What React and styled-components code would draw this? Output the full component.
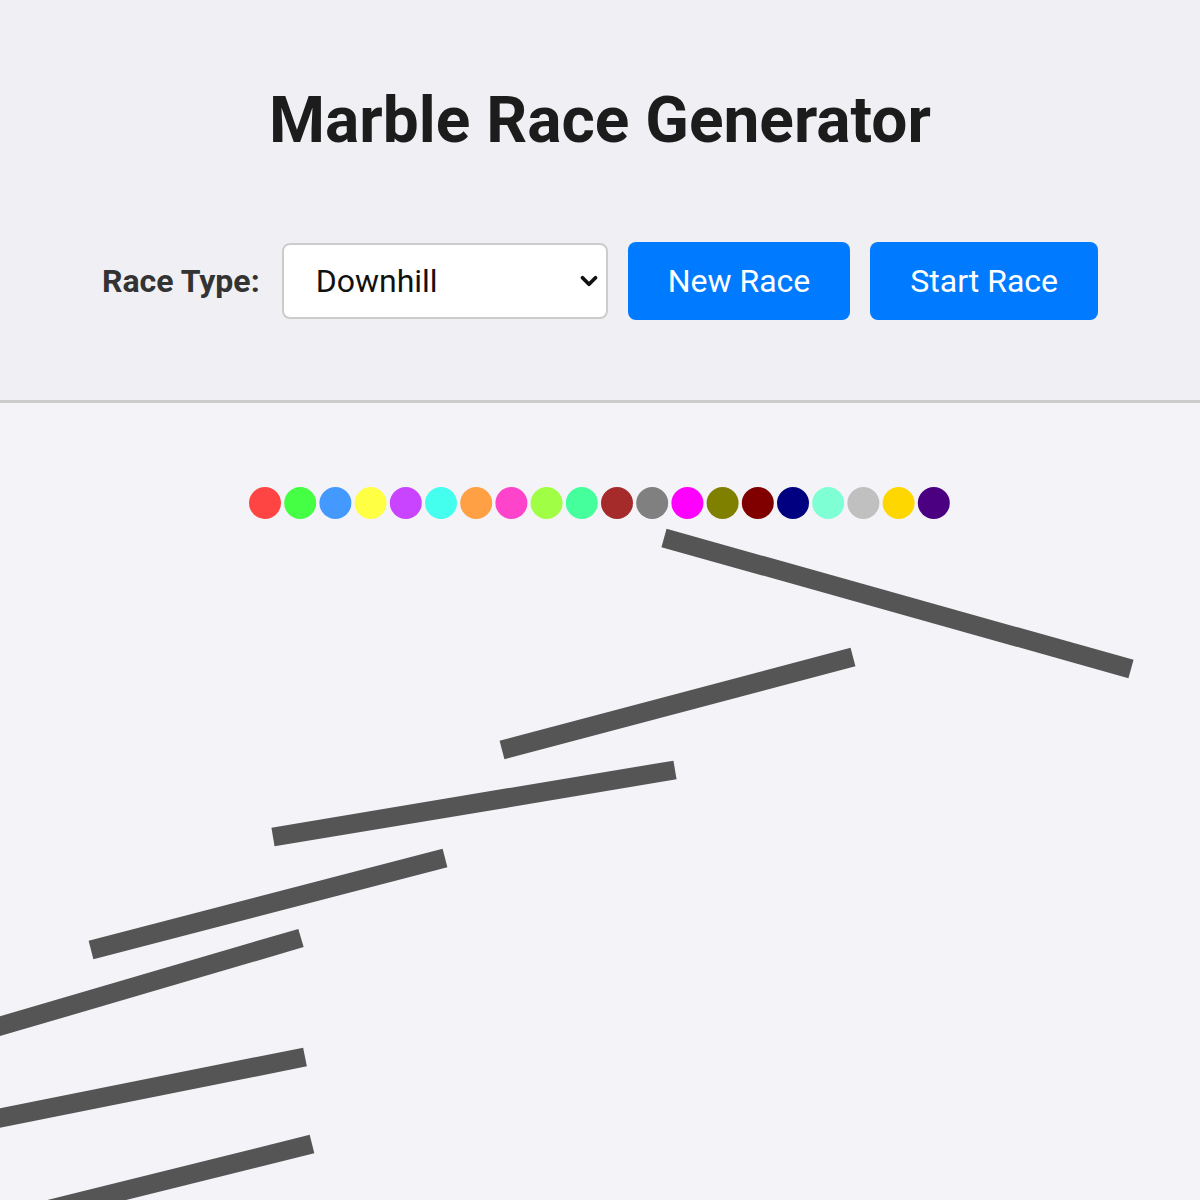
import React, { useState } from 'react'
import styled, { createGlobalStyle } from 'styled-components'
import { ChevronDown } from 'lucide-react'

const GlobalStyle = createGlobalStyle`
  html, body {
    margin: 0;
    padding: 0;
    background: #f4f4f8;
    font-family: Roboto, "Liberation Sans", Arial, sans-serif;
    overflow: hidden;
  }
`

const Page = styled.div`
  display: flex;
  flex-direction: column;
  height: 1200px;
  overflow: hidden;
`

const Header = styled.header`
  background: #f0f0f4;
  border-bottom: 3px solid #cccccc;
  padding: 83px 0 80px;
  display: flex;
  flex-direction: column;
  align-items: center;
  flex-shrink: 0;
`

const Title = styled.h1`
  margin: 0 0 84px;
  font-size: 64px;
  font-weight: 700;
  line-height: 75px;
  color: #1c1c1c;
`

const Controls = styled.div`
  display: flex;
  align-items: center;
  gap: 20px;
  height: 78px;
`

const Label = styled.label`
  font-size: 32px;
  font-weight: 700;
  color: #333333;
  margin-right: 2px;
`

const SelectWrap = styled.div`
  position: relative;
  display: flex;

  svg {
    position: absolute;
    right: 6px;
    top: 50%;
    transform: translateY(-50%);
    pointer-events: none;
    color: #111;
  }
`

const Select = styled.select`
  appearance: none;
  width: 326px;
  height: 76px;
  padding: 0 32px;
  font-family: inherit;
  font-size: 32px;
  color: #111;
  background: #ffffff;
  border: 2px solid #cccccc;
  border-radius: 8px;
  outline: none;
`

const Button = styled.button`
  height: 78px;
  padding: 0 40px;
  font-family: inherit;
  font-size: 32px;
  color: #ffffff;
  background: #007bff;
  border: none;
  border-radius: 8px;
  cursor: pointer;
`

const Track = styled.svg`
  display: block;
  flex: 1;
  width: 1200px;
  background: #f4f4f8;
`

const marbleColors = [
  '#ff4444', '#44ff44', '#4499ff', '#ffff44', '#c844ff',
  '#44ffee', '#ffa044', '#ff44cc', '#a0ff44', '#44ff9c',
  '#a52a2a', '#808080', '#ff00ff', '#808000', '#800000',
  '#000080', '#7fffd4', '#c0c0c0', '#ffd700', '#4b0082',
]

// ramp centre lines in page coords
const ramps = [
  [664, 538, 1131, 669],
  [502, 750, 853, 657],
  [273, 837, 675, 770],
  [91, 950, 445, 858],
  [-30, 1035, 301, 938],
  [-30, 1124, 305, 1057],
  [-30, 1229, 312, 1144],
]

const TOP = 403

const App = () => {
  const [type, setType] = useState('downhill')

  return (
    <Page>
      <GlobalStyle />
      <Header>
        <Title>Marble Race Generator</Title>
        <Controls>
          <Label htmlFor="race-type">Race Type:</Label>
          <SelectWrap>
            <Select
              id="race-type"
              value={type}
              onChange={(e) => setType(e.target.value)}
            >
              <option value="downhill">Downhill</option>
              <option value="spiral">Spiral</option>
              <option value="zigzag">Zigzag</option>
            </Select>
            <ChevronDown size={26} strokeWidth={3.5} />
          </SelectWrap>
          <Button>New Race</Button>
          <Button>Start Race</Button>
        </Controls>
      </Header>
      <Track viewBox="0 0 1200 797" preserveAspectRatio="xMinYMin slice">
        {ramps.map(([x1, y1, x2, y2], i) => (
          <line
            key={i}
            x1={x1}
            y1={y1 - TOP}
            x2={x2}
            y2={y2 - TOP}
            stroke="#555555"
            strokeWidth="19"
          />
        ))}
        {marbleColors.map((c, i) => (
          <circle key={c} cx={265 + i * 35.2} cy={503 - TOP} r="16" fill={c} />
        ))}
      </Track>
    </Page>
  )
}

export default App
